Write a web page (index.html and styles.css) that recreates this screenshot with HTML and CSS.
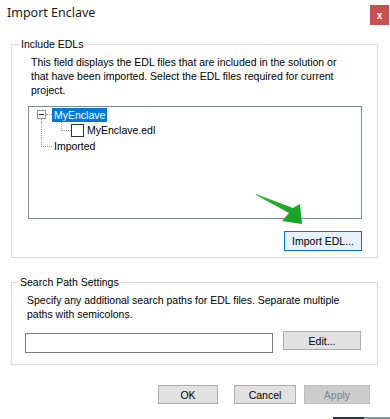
FILE: index.html
```html
<!DOCTYPE html>
<html lang="en">
<head>
  <meta charset="UTF-8">
  <title>Import Enclave</title>
  <link rel="stylesheet" href="styles.css">
</head>
<body>

<div class="titlebar">
  <span class="title">Import Enclave</span>
  <span class="close">x</span>
</div>

<fieldset class="group group-edl">
  <legend>Include EDLs</legend>
  <p class="note">This field displays the EDL files that are included in the solution or<br>that have been imported. Select the EDL files required for current<br>project.</p>

  <div class="tree">
    <div class="node node-root">
      <span class="expander"><span class="minus"></span><span class="stem"></span></span>
      <span class="hook"></span>
      <span class="label selected">MyEnclave</span>
    </div>
    <div class="node node-child">
      <span class="pipe"></span>
      <span class="elbow"></span>
      <span class="check"></span>
      <span class="label">MyEnclave.edl</span>
    </div>
    <div class="node node-last">
      <span class="elbow elbow-root"></span>
      <span class="label">Imported</span>
    </div>
  </div>

  <div class="actions">
    <button class="btn focused">Import EDL...</button>
  </div>
</fieldset>

<fieldset class="group group-search">
  <legend>Search Path Settings</legend>
  <p class="note">Specify any additional search paths for EDL files. Separate multiple<br>paths with semicolons.</p>
  <div class="path-row">
    <input class="path" type="text">
    <button class="btn">Edit...</button>
  </div>
</fieldset>

<div class="footer">
  <button class="btn ok">OK</button>
  <button class="btn cancel">Cancel</button>
  <button class="btn apply" disabled>Apply</button>
</div>

<div class="peek"></div>

<!-- annotation arrow drawn over the dialog -->
<svg class="arrow" width="60" height="40" viewBox="0 0 60 40">
  <defs>
    <linearGradient id="arrowFill" x1="0" y1="0" x2="1" y2="1">
      <stop offset="0" stop-color="#27b52f"/>
      <stop offset="1" stop-color="#159f22"/>
    </linearGradient>
  </defs>
  <polygon points="6,6 43,20 50,16 52,36 32,33 39,25 6,7" fill="url(#arrowFill)"/>
</svg>

</body>
</html>
```

FILE: styles.css
```css
body {
  margin: 0;
  width: 390px;
  height: 419px;
  overflow: hidden;
  background: #fff;
  color: #000;
  font-family: "Liberation Sans", Arial, sans-serif;
  font-size: 10.5px;
}

.titlebar {
  display: flex;
  justify-content: space-between;
  align-items: flex-start;
  height: 37px;
  padding-left: 7px;
}

.title {
  margin-top: 5px;
  font-family: "Noto Sans", sans-serif;
  font-size: 12.5px;
  line-height: 16px;
  color: #1a1a1a;
}

.close {
  display: flex;
  align-items: center;
  justify-content: center;
  width: 19px;
  height: 20px;
  margin: 5px 1px 0 0;
  background: #c75050;
  color: #fff;
  font-weight: bold;
  font-size: 10px;
}

.group {
  box-sizing: border-box;
  width: 367px;
  min-width: 0;
  margin: 0 0 0 11px;
  border: 1px solid #dcdcdc;
}

.group legend {
  padding: 0 1px;
  line-height: 15px;
}

.group-edl {
  padding: 3px 15px 6px 16px;
}

.group-edl legend {
  margin-left: -8px;
}

.group-search {
  margin-top: 17px;
  padding: 3px 15px 11px 13px;
}

.group-search legend {
  margin-left: -6px;
}

.note {
  margin: 0 0 0 3px;
  line-height: 14px;
}

.group-search .note {
  margin-left: 2px;
}

/* tree view */
.tree {
  box-sizing: border-box;
  height: 113px;
  margin-top: 9px;
  padding-left: 8px;
  border: 1px solid #828790;
}

.node {
  display: flex;
  align-items: center;
}

.node-root { height: 15px; }
.node-child { height: 16px; }
.node-last { height: 15px; }

.expander {
  display: flex;
  flex-direction: column;
  align-self: stretch;
  box-sizing: border-box;
  width: 9px;
  padding-top: 3px;
}

.minus {
  display: flex;
  align-items: center;
  justify-content: center;
  box-sizing: border-box;
  height: 9px;
  border: 1px solid #919191;
  background: #fff;
}

.minus::before {
  content: "";
  width: 5px;
  height: 1px;
  background: #333;
}

.stem {
  flex: 1;
  margin-left: 4px;
  border-left: 1px dotted #a0a0a0;
}

.hook {
  width: 6px;
  border-top: 1px dotted #a0a0a0;
}

.pipe {
  align-self: stretch;
  width: 19px;
  margin-left: 4px;
  border-left: 1px dotted #a0a0a0;
}

.elbow {
  align-self: flex-start;
  width: 9px;
  height: 8px;
  border-left: 1px dotted #a0a0a0;
  border-bottom: 1px dotted #a0a0a0;
}

.elbow-root {
  width: 10px;
  margin-left: 4px;
}

.check {
  box-sizing: border-box;
  width: 13px;
  height: 13px;
  margin-right: 1px;
  border: 1px solid #333;
  background: #fff;
}

.label {
  padding: 0 2px;
  line-height: 14px;
  white-space: nowrap;
}

.selected {
  background: #0078d7;
  color: #fff;
}

/* buttons */
.btn {
  box-sizing: border-box;
  height: 19px;
  padding: 0;
  border: 1px solid #adadad;
  background: #e1e1e1;
  color: #000;
  font: inherit;
}

.actions {
  display: flex;
  justify-content: flex-end;
  margin-top: 12px;
}

.actions .btn,
.path-row .btn {
  width: 78px;
}

.btn.focused {
  height: 20px;
  border-color: #0078d7;
  background: #e5f1fb;
}

.path-row {
  display: flex;
  align-items: flex-start;
  gap: 10px;
  margin-top: 10px;
}

.path {
  box-sizing: border-box;
  width: 248px;
  height: 20px;
  margin: 2px 0 0;
  padding: 0;
  border: 1px solid #7a7a7a;
}

.footer {
  display: flex;
  margin-top: 20px;
  padding-left: 158px;
}

.footer .btn {
  height: 19px;
}

.ok { width: 60px; }
.cancel { width: 62px; margin-left: 16px; }

.apply {
  width: 66px;
  margin-left: 8px;
  border-color: #bfbfbf;
  background: #cccccc;
  color: #838383;
}

.peek {
  width: 57px;
  height: 2px;
  margin: 13px 0 0 333px;
  background: linear-gradient(to right, #26324a 0 55%, #8a93a3 55%);
}

.arrow {
  position: absolute;
  left: 250px;
  top: 188px;
}
```
